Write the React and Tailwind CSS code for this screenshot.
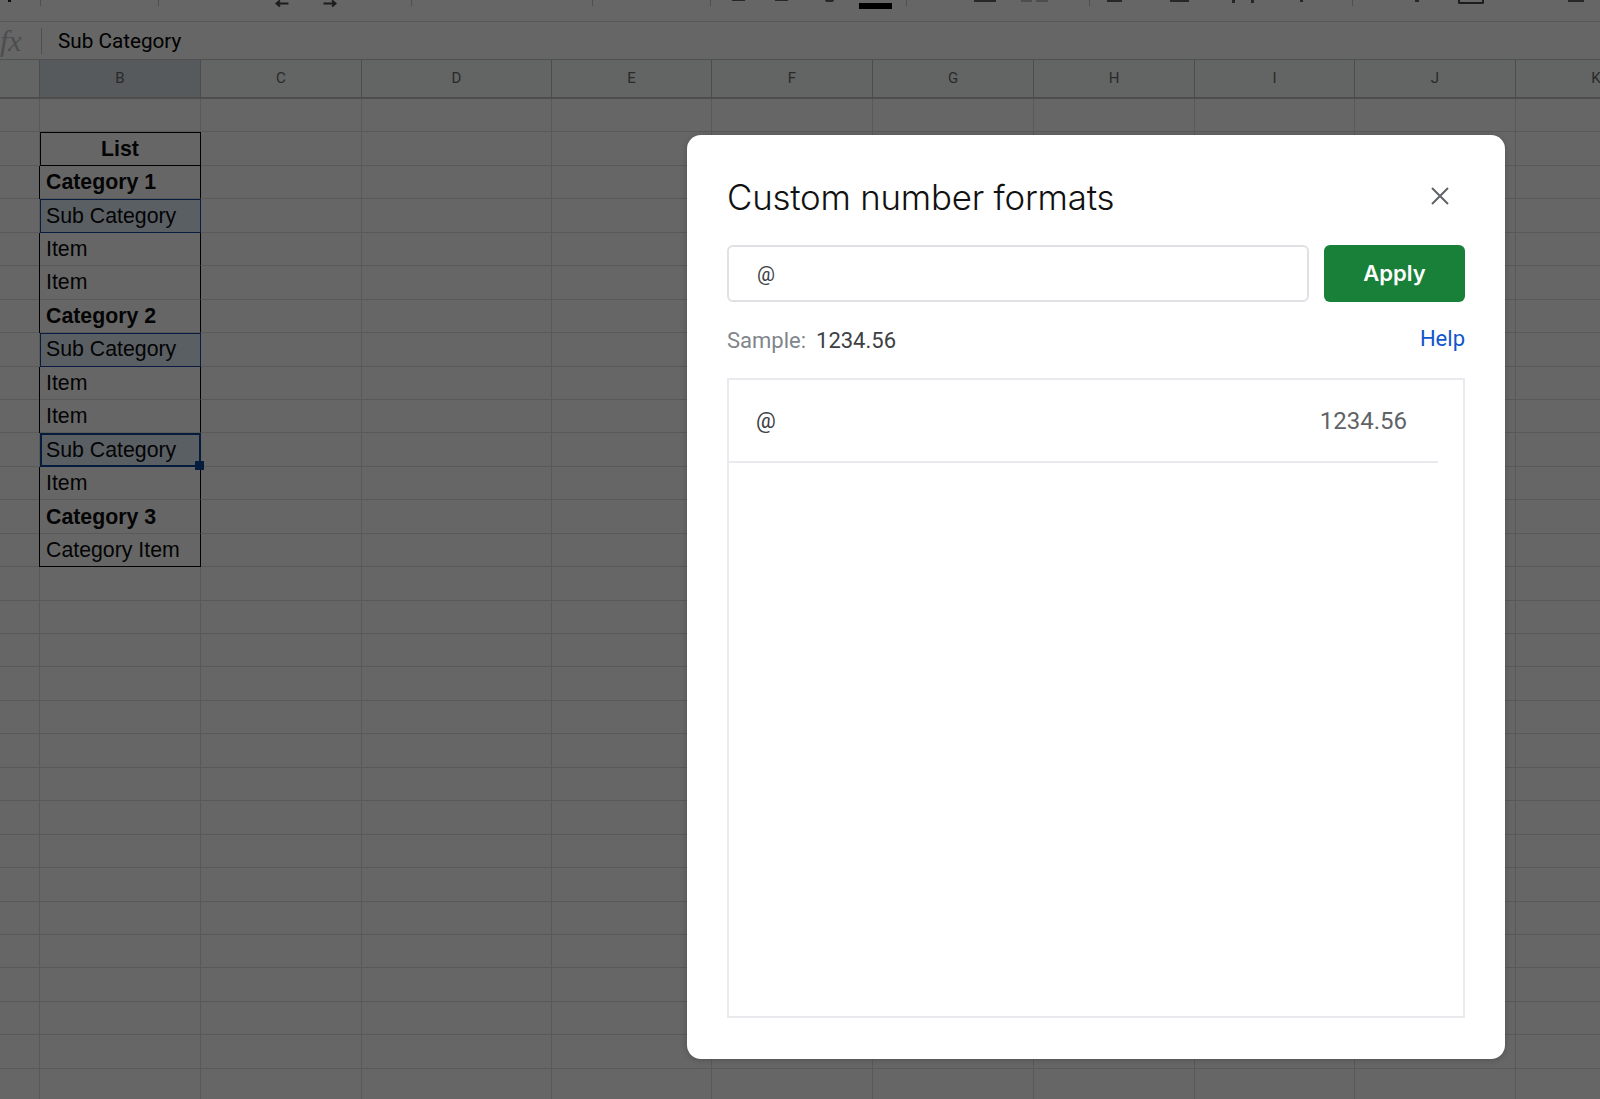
import React from 'react';

const columns = ['', 'B', 'C', 'D', 'E', 'F', 'G', 'H', 'I', 'J', 'K'];

// blank row, then the list table, then blank rows to the bottom of the page
const tableRows = [
  { text: 'List', kind: 'head' },
  { text: 'Category 1', kind: 'bold' },
  { text: 'Sub Category', kind: 'sub' },
  { text: 'Item', kind: 'plain' },
  { text: 'Item', kind: 'plain' },
  { text: 'Category 2', kind: 'bold' },
  { text: 'Sub Category', kind: 'sub' },
  { text: 'Item', kind: 'plain' },
  { text: 'Item', kind: 'plain' },
  { text: 'Sub Category', kind: 'active' },
  { text: 'Item', kind: 'plain' },
  { text: 'Category 3', kind: 'bold' },
  { text: 'Category Item', kind: 'last' },
];

const rows = [null, ...tableRows, ...Array(16).fill(null)];

const cellKinds = {
  head: 'relative z-10 justify-center font-bold outline-[1.5px] -outline-offset-1 outline-black',
  bold: 'relative pl-[6px] font-bold border-r-black shadow-[-1px_0_0_#000]',
  plain: 'relative pl-[6px] border-r-black shadow-[-1px_0_0_#000]',
  last: 'relative pl-[6px] border-r-black border-b-black border-b-[1.5px] shadow-[-1px_0_0_#000]',
  sub: 'relative z-10 pl-[6px] bg-[#e2eefb] outline-[1.5px] -outline-offset-1 outline-[#1348a0]',
  active: 'relative z-20 pl-[6px] bg-[#e2eefb] outline-[2.5px] -outline-offset-2 outline-[#114796]',
};

function Sep({ className }) {
  return <div className={`h-[6px] w-px shrink-0 bg-[#c4c7c5] ${className}`} />;
}

function Frag({ className }) {
  return <div className={`shrink-0 bg-[#5f6368] ${className}`} />;
}

function Toolbar() {
  return (
    <div className="flex h-[22px] items-start overflow-hidden border-b-[1.5px] border-[#dcdcdc] bg-white">
      <Frag className="ml-[8px] h-[2px] w-[3px] bg-[#222222]" />
      <Sep className="ml-[29px]" />
      <Sep className="ml-[117px]" />
      <svg className="ml-[116px] shrink-0" width="14" height="8" viewBox="0 0 14 8" fill="none" stroke="#444746" strokeWidth="2">
        <path d="M5 0.5 L1.5 3.5 L5 6.5 M2 3.5 H13.5" />
      </svg>
      <svg className="ml-[34px] shrink-0" width="14" height="8" viewBox="0 0 14 8" fill="none" stroke="#444746" strokeWidth="2">
        <path d="M9 0.5 L12.5 3.5 L9 6.5 M0.5 3.5 H12" />
      </svg>
      <Sep className="ml-[74px]" />
      <Sep className="ml-[180px]" />
      <Sep className="ml-[117px]" />
      <Frag className="ml-[21px] h-px w-[13px]" />
      <Frag className="ml-[30px] h-px w-[13px]" />
      <Frag className="ml-[37px] h-[2px] w-[9px] rounded-b-full" />
      <div className="ml-[25px] mt-[3px] h-[6px] w-[33px] shrink-0 bg-black" />
      <Sep className="ml-[14px]" />
      <Frag className="ml-[67px] h-[2px] w-[22px]" />
      <Frag className="ml-[25px] h-[2px] w-[11px] bg-[#bdc1c6]" />
      <Frag className="ml-[4px] h-[2px] w-[12px] bg-[#bdc1c6]" />
      <Sep className="ml-[41px]" />
      <Frag className="ml-[17px] h-[2px] w-[15px]" />
      <Frag className="ml-[48px] h-[2px] w-[19px]" />
      <Frag className="ml-[43px] h-[3px] w-[3px]" />
      <Frag className="ml-[16px] h-[3px] w-[3px]" />
      <Frag className="ml-[46px] h-[2px] w-[3px]" />
      <Sep className="ml-[49px]" />
      <Frag className="ml-[62px] h-[2px] w-[4px]" />
      <div className="ml-[39px] h-[4px] w-[26px] shrink-0 rounded-b-[2px] border-x-2 border-b-2 border-[#444746]" />
      <Frag className="ml-[84px] h-[2px] w-[16px]" />
    </div>
  );
}

function FormulaBar() {
  return (
    <div className="flex h-[38px] items-center border-b-[1.5px] border-[#c9c9c9] bg-white">
      <span className="w-[22px] font-['Liberation_Serif',serif] text-[30px] italic leading-none text-[#bdc1c6]">fx</span>
      <div className="ml-[19px] h-[26px] w-px bg-[#c4c7c5]" />
      <span className="ml-[16px] pt-[2px] font-['Roboto',sans-serif] text-[20.7px] text-black">Sub Category</span>
    </div>
  );
}

function Sheet() {
  return (
    <div className="isolate grid grid-cols-[40px_161px_161px_190px_160px_161px_161px_161px_160px_161px_161px] grid-rows-[39px] auto-rows-[33.45px] overflow-hidden">
      {columns.map((col, i) => (
        <div
          key={col || 'corner'}
          className={`flex items-center justify-center whitespace-nowrap border-r-[1.5px] border-b-[2.5px] border-[#c0c0c0] font-['Roboto',sans-serif] text-[15px] text-[#6a6a6a] ${i === 1 ? 'bg-[#dae2e7]' : 'bg-[#f8faf9]'}`}
        >
          {col}
        </div>
      ))}
      {rows.map((row, r) =>
        columns.map((col, c) => {
          if (c === 1 && row) {
            return (
              <div
                key={`${r}-${c}`}
                className={`flex items-center whitespace-nowrap border-r border-b border-[#dfdfdf] pt-[2px] font-['Liberation_Sans',Arial,sans-serif] text-[21.3px] text-[#0a0a0a] ${cellKinds[row.kind]}`}
              >
                {row.text}
                {row.kind === 'active' && (
                  <div className="absolute -bottom-[4px] -right-[4px] h-[9px] w-[9px] bg-[#114796]" />
                )}
              </div>
            );
          }
          return <div key={`${r}-${c}`} className="border-r border-b border-[#dfdfdf] bg-white" />;
        })
      )}
    </div>
  );
}

function NumberFormatDialog() {
  return (
    <div className="absolute inset-0 bg-black/60 pl-[687px] pt-[135px]">
      <div className="flex h-[924px] w-[818px] flex-col rounded-[14px] bg-white px-10 pb-[41px] shadow-[0_1px_6px_rgba(0,0,0,0.2)]">
        <div className="flex h-[110px] shrink-0 items-center justify-between pt-[14px]">
          <h2 className="font-['Inter',sans-serif] text-[34.8px] font-light tracking-[-0.2px] text-[#111111]">Custom number formats</h2>
          <svg className="-mt-[2px] mr-[16px]" width="18" height="18" viewBox="0 0 18 18" fill="none" stroke="#5f6368" strokeWidth="2">
            <path d="M1 1 L17 17 M17 1 L1 17" />
          </svg>
        </div>

        <div className="flex h-[57px] shrink-0 gap-[15px]">
          <div className="flex flex-1 items-center rounded-md border-2 border-[#e0e1e5] pl-[28px] font-['Roboto',sans-serif] text-[20px] text-[#3c4043]">@</div>
          <button className="w-[141px] rounded-md bg-[#188038] font-['Inter',sans-serif] text-[22px] font-semibold text-white">Apply</button>
        </div>

        <div className="flex h-[76px] shrink-0 items-center justify-between pb-[1px] font-['Roboto',sans-serif] text-[22px]">
          <div className="mt-[2px] flex gap-[10px]">
            <span className="text-[#80868b]">Sample:</span>
            <span className="text-[#3c4043]">1234.56</span>
          </div>
          <a className="-mt-[3px] text-[#1155cc]">Help</a>
        </div>

        <div className="flex-1 border-2 border-[#e8eaed]">
          <div className="mr-[25px] flex h-[83px] items-center justify-between border-b-2 border-[#e8eaed] pl-[27px] pr-[31px] font-['Roboto',sans-serif] text-[#5f6368]">
            <span className="text-[22px] text-[#3c4043]">@</span>
            <span className="text-[24px]">1234.56</span>
          </div>
        </div>
      </div>
    </div>
  );
}

export default function App() {
  return (
    <div className="relative h-[1099px] w-[1600px] overflow-hidden bg-white">
      <Toolbar />
      <FormulaBar />
      <Sheet />
      <NumberFormatDialog />
    </div>
  );
}
